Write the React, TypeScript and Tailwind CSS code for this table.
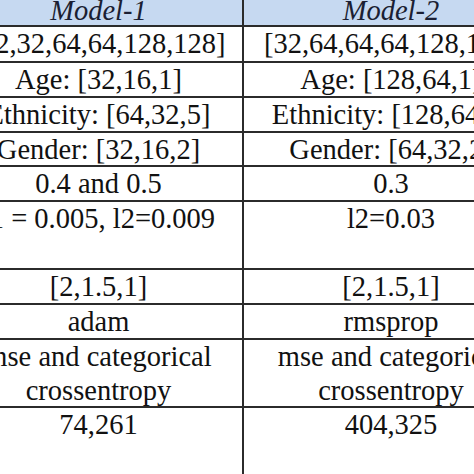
import React from "react";

type Row = { a: React.ReactNode; b: React.ReactNode; h: string };

const ROWS: Row[] = [
  { a: "[32,32,64,64,128,128]", b: "[32,64,64,64,128,128]", h: "h-[36px]" },
  { a: "Age: [32,16,1]", b: "Age: [128,64,1]", h: "h-[35px]" },
  { a: "Ethnicity: [64,32,5]", b: "Ethnicity: [128,64,5]", h: "h-[35px]" },
  { a: "Gender: [32,16,2]", b: "Gender: [64,32,2]", h: "h-[34px]" },
  { a: "0.4 and 0.5", b: "0.3", h: "h-[35px]" },
  { a: "l1 = 0.005, l2=0.009", b: "l2=0.03", h: "h-[68px]" },
  { a: "[2,1.5,1]", b: "[2,1.5,1]", h: "h-[35px]" },
  { a: "adam", b: "rmsprop", h: "h-[35px]" },
  {
    a: (
      <>
        mse and categorical
        <br />
        crossentropy
      </>
    ),
    b: (
      <>
        mse and categorical
        <br />
        crossentropy
      </>
    ),
    h: "h-[68px]",
  },
];

export default function App() {
  return (
    <div className="w-[474px] h-[474px] overflow-hidden bg-white font-['Liberation_Serif','Times_New_Roman',serif]">
      <div className="mt-[-6px] ml-[-45px] w-[583px] text-[28.5px] leading-[34px] text-[#111]">
        <div className="flex h-[33px] bg-[#c6d9f1] border-b-2 border-[#2b2b2b] italic text-[#1b1f33]">
          <div className="w-[289px] shrink-0 border-r-2 border-[#2b2b2b] text-center whitespace-nowrap">Model-1</div>
          <div className="w-[294px] shrink-0 text-center whitespace-nowrap">Model-2</div>
        </div>
        {ROWS.map((r, i) => (
          <div key={i} className={`flex ${r.h} border-b-2 border-[#2b2b2b]`}>
            <div className="w-[289px] shrink-0 border-r-2 border-[#2b2b2b] text-center whitespace-nowrap">{r.a}</div>
            <div className="w-[294px] shrink-0 text-center whitespace-nowrap">{r.b}</div>
          </div>
        ))}
        <div className="flex h-[80px]">
          <div className="w-[289px] shrink-0 border-r-2 border-[#2b2b2b] text-center">74,261</div>
          <div className="w-[294px] shrink-0 text-center">404,325</div>
        </div>
      </div>
    </div>
  );
}
